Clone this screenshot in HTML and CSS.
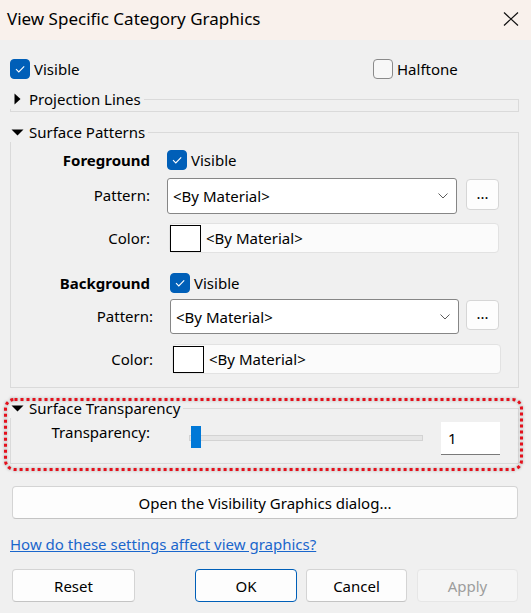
FILE: index.html
```html
<!DOCTYPE html>
<html>
<head>
<meta charset="utf-8">
<link rel="stylesheet" href="styles.css">
</head>
<body>
<header class="titlebar">
  <span class="title">View Specific Category Graphics</span>
  <svg class="close" width="16" height="14" viewBox="0 0 16 14"><path d="M1 0.5 L15 13.5 M15 0.5 L1 13.5" stroke="#111" stroke-width="1.2" fill="none"/></svg>
</header>
<main class="content">
  <div class="toprow">
    <span class="check"><span class="cb on"><svg width="12" height="10" viewBox="0 0 12 10"><path d="M2 5.2 L4.8 8 L10.2 2.4" stroke="#fff" stroke-width="1.1" fill="none"/></svg></span>Visible</span>
    <span class="check"><span class="cb"></span>Halftone</span>
  </div>

  <section class="group collapsed">
    <div class="ghead"><span class="tri"><svg width="7" height="12" viewBox="0 0 7 12"><path d="M0.5 0.5 L6.5 6 L0.5 11.5 Z" fill="#000"/></svg></span>Projection Lines</div>
  </section>

  <section class="group patterns">
    <div class="ghead"><span class="tri"><svg width="13" height="7" viewBox="0 0 13 7"><path d="M0.5 0.5 L12.5 0.5 L6.5 6.5 Z" fill="#000"/></svg></span>Surface Patterns</div>

    <div class="sub">
      <div class="row head-row">
        <span class="lbl bold">Foreground</span>
        <span class="check"><span class="cb on"><svg width="12" height="10" viewBox="0 0 12 10"><path d="M2 5.2 L4.8 8 L10.2 2.4" stroke="#fff" stroke-width="1.1" fill="none"/></svg></span>Visible</span>
      </div>
      <div class="row pat-row">
        <span class="lbl">Pattern:</span>
        <div class="select"><span>&lt;By Material&gt;</span><svg width="10" height="6" viewBox="0 0 10 6"><path d="M0.5 0.5 L5 5 L9.5 0.5" stroke="#5c5c5c" stroke-width="1" fill="none"/></svg></div>
        <button class="browse">...</button>
      </div>
      <div class="row col-row">
        <span class="lbl">Color:</span>
        <div class="colorfield"><span class="swatch"></span>&lt;By Material&gt;</div>
      </div>
    </div>

    <div class="sub shift">
      <div class="row head-row bg-head">
        <span class="lbl bold">Background</span>
        <span class="check"><span class="cb on"><svg width="12" height="10" viewBox="0 0 12 10"><path d="M2 5.2 L4.8 8 L10.2 2.4" stroke="#fff" stroke-width="1.1" fill="none"/></svg></span>Visible</span>
      </div>
      <div class="row pat-row bg-pat">
        <span class="lbl">Pattern:</span>
        <div class="select"><span>&lt;By Material&gt;</span><svg width="10" height="6" viewBox="0 0 10 6"><path d="M0.5 0.5 L5 5 L9.5 0.5" stroke="#5c5c5c" stroke-width="1" fill="none"/></svg></div>
        <button class="browse">...</button>
      </div>
      <div class="row col-row bg-col">
        <span class="lbl">Color:</span>
        <div class="colorfield"><span class="swatch"></span>&lt;By Material&gt;</div>
      </div>
    </div>
  </section>

  <section class="group transp">
    <div class="ghead"><span class="tri"><svg width="13" height="7" viewBox="0 0 13 7"><path d="M0.5 0.5 L12.5 0.5 L6.5 6.5 Z" fill="#000"/></svg></span>Surface Transparency</div>
    <div class="trow">
      <span class="lbl">Transparency:</span>
      <div class="slider"><div class="track"></div><div class="thumb"></div></div>
      <div class="tbox">1</div>
    </div>
    <svg class="annot" width="519" height="73" viewBox="0 0 519 73"><rect x="1.5" y="1.5" width="516" height="70" rx="9" ry="9" fill="none" stroke="#e5101c" stroke-width="3" stroke-dasharray="3 3"/></svg>
  </section>

  <button class="btn wide">Open the Visibility Graphics dialog...</button>
  <a class="help" href="#">How do these settings affect view graphics?</a>

  <div class="actions">
    <button class="btn reset">Reset</button>
    <button class="btn ok">OK</button>
    <button class="btn cancel">Cancel</button>
    <button class="btn apply" disabled>Apply</button>
  </div>
</main>
</body>
</html>
```

FILE: styles.css
```css
html, body {
  margin: 0;
  background: #f0f0f0;
}
body {
  font-family: "Noto Sans", "Segoe UI", sans-serif;
  font-size: 15px;
  color: #000;
  width: 531px;
  height: 613px;
  overflow: hidden;
}
.titlebar {
  height: 40px;
  box-sizing: border-box;
  padding: 0 12px 3px 7px;
  display: flex;
  align-items: center;
  justify-content: space-between;
  background: #f9f1ec;
}
.title {
  font-size: 17px;
  line-height: 22px;
}
.content {
  padding: 0 12px 0 10px;
}
.toprow {
  display: grid;
  grid-template-columns: 363px auto;
  margin-top: 19px;
  height: 20px;
  align-items: center;
}
.check {
  display: flex;
  align-items: center;
  gap: 4px;
  line-height: 20px;
}
.cb {
  width: 20px;
  height: 20px;
  box-sizing: border-box;
  border-radius: 4px;
  border: 1px solid #8a8a8a;
  background: #f7f7f7;
  display: flex;
  align-items: center;
  justify-content: center;
  flex: none;
}
.cb.on {
  background: #005fb8;
  border-color: #005fb8;
}
.group {
  border: 1px solid #dadada;
  margin-top: 20px;
}
.ghead {
  display: flex;
  align-items: center;
  height: 20px;
  line-height: 20px;
  margin: -11px 0 0 -1px;
  background: #f0f0f0;
  width: max-content;
  padding-right: 3px;
}
.tri {
  width: 15px;
  display: flex;
  justify-content: center;
  margin-right: 4px;
}
.collapsed {
  padding-bottom: 2px;
}
.patterns {
  padding-bottom: 13px;
}
.row {
  display: flex;
  align-items: center;
}
.lbl {
  width: 139px;
  flex: none;
  text-align: right;
  margin-right: 17px;
  line-height: 20px;
}
.bold {
  font-weight: 700;
}
.shift .lbl {
  width: 142px;
}
.shift .lbl.bold {
  width: 139px;
  padding-right: 3px;
}
.head-row {
  margin-top: 8px;
  height: 20px;
}
.pat-row {
  margin-top: 8px;
  height: 36px;
  align-items: flex-start;
}
.col-row {
  margin-top: 9px;
  height: 30px;
}
.bg-head {
  margin-top: 20px;
}
.bg-pat {
  margin-top: 6px;
  height: 35px;
}
.bg-col {
  margin-top: 10px;
}
.pat-row .lbl {
  margin-top: 7px;
}
.select {
  width: 290px;
  height: 100%;
  box-sizing: border-box;
  border: 1px solid #868686;
  border-radius: 3px;
  background: #fff;
  display: flex;
  align-items: center;
  justify-content: space-between;
  padding: 0 8px 0 5px;
}
.shift .select {
  width: 289px;
}
.browse {
  width: 33px;
  height: 31px;
  margin: 1px 0 0 9px;
  box-sizing: border-box;
  border: 1px solid #d6d6d6;
  border-radius: 4px;
  background: #fdfdfd;
  font: inherit;
  line-height: 20px;
  padding: 0 0 4px;
  color: #000;
}
.shift .browse {
  margin-left: 7px;
  height: 30px;
}
.colorfield {
  width: 330px;
  height: 30px;
  margin-left: 2px;
  box-sizing: border-box;
  border: 1px solid #e2e2e2;
  border-radius: 4px;
  background: #fbfbfb;
  display: flex;
  align-items: center;
  padding-left: 0;
}
.shift .colorfield {
  width: 329px;
}
.swatch {
  width: 31px;
  height: 27px;
  box-sizing: border-box;
  border: 1px solid #000;
  background: #fff;
  margin-right: 5px;
  flex: none;
}
.transp {
  position: relative;
  padding-bottom: 8px;
}
.trow {
  display: flex;
  align-items: flex-start;
  margin-top: 4px;
  height: 33px;
}
.trow .lbl {
  margin-top: 0;
  margin-right: 39px;
}
.slider {
  position: relative;
  width: 234px;
  height: 33px;
}
.track {
  margin-top: 13px;
  height: 6px;
  box-sizing: border-box;
  background: #e6e6e6;
  border: 1px solid #d3d3d3;
}
.thumb {
  position: absolute;
  left: 2px;
  top: 4px;
  width: 10px;
  height: 22px;
  background: #0078d7;
}
.tbox {
  margin-left: 18px;
  width: 59px;
  height: 33px;
  box-sizing: border-box;
  background: #fff;
  border-bottom: 1px solid #7a7a7a;
  padding-left: 7px;
  line-height: 32px;
}
.annot {
  position: absolute;
  left: -7px;
  top: -11px;
  pointer-events: none;
  filter: drop-shadow(0 0 1.5px rgba(0, 0, 0, 0.35));
}
.btn {
  font: inherit;
  color: #000;
  box-sizing: border-box;
  height: 33px;
  background: #fdfdfd;
  border: 1px solid #d4d4d4;
  border-bottom-color: #c4c4c4;
  border-radius: 4px;
  padding: 0;
  line-height: 20px;
}
.wide {
  display: block;
  width: 506px;
  margin: 22px 0 0 2px;
}
.help {
  display: block;
  width: max-content;
  margin-top: 15px;
  line-height: 20px;
  color: #1a66cc;
  text-decoration: underline;
}
.actions {
  display: flex;
  margin-top: 15px;
}
.reset {
  width: 123px;
  margin-left: 2px;
}
.ok {
  width: 102px;
  margin-left: 60px;
  border-color: #005fb8;
}
.cancel {
  width: 101px;
  margin-left: 9px;
}
.apply {
  width: 101px;
  margin-left: 10px;
  background: #f5f5f5;
  border-color: #e6e6e6;
  color: #9d9d9d;
}
```
